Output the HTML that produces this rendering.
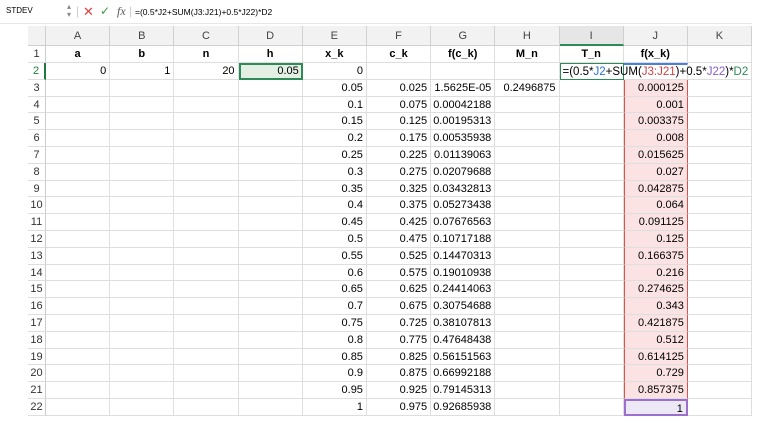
<!DOCTYPE html>
<html><head><meta charset="utf-8"><style>
*{margin:0;padding:0;box-sizing:border-box}
body{width:766px;height:423px;background:#fff;font-family:"Liberation Sans",sans-serif;font-size:11px;color:#000;position:relative;overflow:hidden}
.fb{position:absolute;left:0;top:0;width:752px;height:24px;background:#fff;border-bottom:1px solid #e6e6e6}
.fb span{position:absolute;top:6px;font-size:9px}
.grid{position:absolute;left:28px;top:26px}
.r{display:flex;height:16.8px}
.c{width:64.2px;border-right:1px solid #dedede;border-bottom:1px solid #dedede;text-align:right;padding-right:3px;line-height:16px;white-space:nowrap}
.n{width:18px;border-right:1px solid #ccc;border-bottom:1px solid #dedede;text-align:center;color:#333;line-height:16px;font-size:11px}
.h .c,.h .n{background:#f2f2f2;text-align:center;color:#444;padding:0;border-color:#d0d0d0;line-height:20px}
.h{height:20px}
.b .c{text-align:center;font-weight:bold;padding:0}
.pk{background:#fbe3e3}
</style></head><body>
<div class="fb">
<span style="left:6px;font-size:8px">STDEV</span>
<span style="left:67px;top:3px;font-size:8px;color:#888;line-height:8px">▴<br>▾</span>
<span style="left:76px;top:4px;color:#ccc;font-size:12px">|</span>
<span style="left:83px;top:4px;color:#e04040;font-size:13px">✕</span>
<span style="left:100px;top:4px;color:#3a9a3a;font-size:12px">✓</span>
<span style="left:117px;top:4px;font-family:'Liberation Serif',serif;font-style:italic;font-size:12px;color:#555">fx</span>
<span style="left:129px;top:4px;color:#ccc;font-size:12px">|</span>
<span style="left:135px;top:7px;font-size:8.5px">=(0.5*J2+SUM(J3:J21)+0.5*J22)*D2</span>
</div>
<div class="grid" id="g"></div>
<script>
var g=document.getElementById('g'),L='ABCDEFGHIJK';
var h='<div class="r h"><div class="n"></div>';
for(var i=0;i<11;i++)h+='<div class="c"'+(i==8?' style="border-bottom:2px solid #2e8b57;background:#e6e6e6"':'')+'>'+L[i]+'</div>';
h+='</div><div class="r b" style="height:17px"><div class="n">1</div>';
['a','b','n','h','x_k','c_k','f(c_k)','M_n','T_n','f(x_k)',''].forEach(function(t){h+='<div class="c">'+t+'</div>'});
h+='</div>';
var G=['1.5625E-05','0.00042188','0.00195313','0.00535938','0.01139063','0.02079688','0.03432813','0.05273438','0.07676563','0.10717188','0.14470313','0.19010938','0.24414063','0.30754688','0.38107813','0.47648438','0.56151563','0.66992188','0.79145313','0.92685938'];
var J=['0.000125','0.001','0.003375','0.008','0.015625','0.027','0.042875','0.064','0.091125','0.125','0.166375','0.216','0.274625','0.343','0.421875','0.512','0.614125','0.729','0.857375','1'];
for(var r=2;r<=22;r++){
 h+='<div class="r"><div class="n"'+(r==2?' style="color:#1e7a3e;border-right:2px solid #1e7a3e"':'')+'>'+r+'</div>';
 var v=['','','','','','','','','','',''];
 if(r==2){v=['0','1','20','0.05','0','','','','','',''];}
 else{var k=r-2;v[4]=String(+(k*0.05).toFixed(2));v[5]=String(+((k-0.5)*0.05).toFixed(3));v[6]=G[k-1];if(r==3)v[7]='0.2496875';v[9]=J[k-1];}
 for(var i=0;i<11;i++){
  var s='',cls='c';
  if(r==2&&i==3)s=' style="background:#e3efe3;outline:2px solid #2e8b57;outline-offset:-2px"';
  if(r>=3&&r<=21&&i==9){cls+=' pk';s=' style="border-left:1.5px solid #d9534f;border-right:1.5px solid #d9534f"';}
  if(r==22&&i==9)s=' style="background:#ece8f6;border:2px solid #9b6fd0"';
  if(r==2&&i==8){s=' style="overflow:visible;text-align:left;padding-left:2px;border:1.5px solid #2e8b57;position:relative;z-index:2;background:#fff;font-size:11.5px"';
   v[8]='=(0.5*<span style="color:#2a6fdb">J2</span>+SUM(<span style="color:#d04040">J3:J21</span>)+0.5*<span style="color:#8a5cc8">J22</span>)*<span style="color:#2e8b57">D2</span>';}
  if(r==2&&i==9)s=' style="border-top:2px solid #4a7fe0"';
  h+='<div class="'+cls+'"'+s+'>'+v[i]+'</div>';
 }
 h+='</div>';
}
g.innerHTML=h;
</script>
</body></html>
